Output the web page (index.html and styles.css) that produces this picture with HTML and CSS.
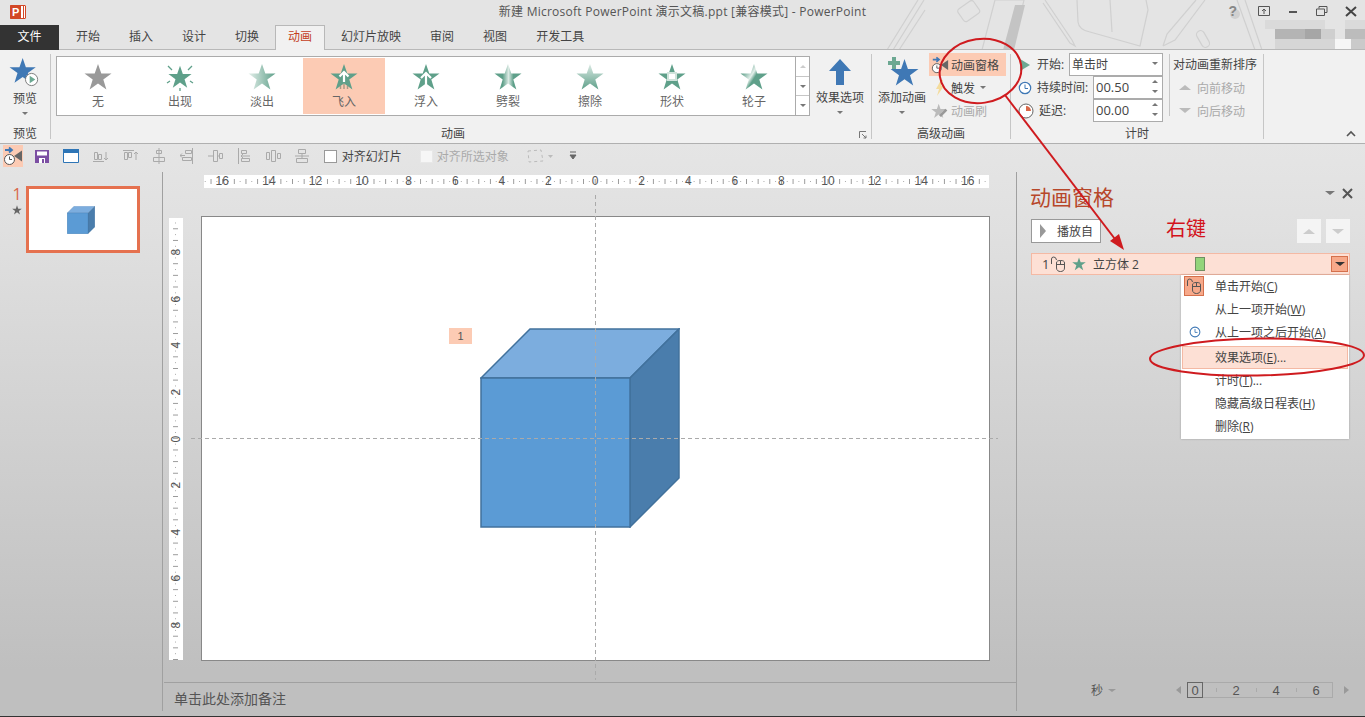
FILE: index.html
```html
<!DOCTYPE html>
<html lang="zh-CN">
<head>
    <meta charset="UTF-8">
    <title>新建 Microsoft PowerPoint 演示文稿.ppt [兼容模式] - PowerPoint</title>
    <link rel="stylesheet" href="styles.css">
</head>
<body>
    <!-- shared icons -->
    <svg class="defs" width="0" height="0">
        <defs>
            <symbol id="star" viewBox="0 0 28 28"><polygon points="14,1 17.3,10.5 27.5,10.5 19.3,16.6 22.4,26.5 14,20.5 5.6,26.5 8.7,16.6 0.5,10.5 10.7,10.5"/></symbol>
            <symbol id="cube" viewBox="0 0 200 200">
                <polygon points="1,50 50,1 199,1 150,50" fill="#7cadde" stroke="#41719c" stroke-width="1.5"/>
                <polygon points="150,50 199,1 199,150 150,199" fill="#4a7dac" stroke="#41719c" stroke-width="1.5"/>
                <rect x="1" y="50" width="149" height="149" fill="#5b9bd5" stroke="#41719c" stroke-width="1.5"/>
            </symbol>
            <symbol id="mouse" viewBox="0 0 14 16">
                <path d="M.5 8V3Q.5 1 2.800 1 5 1 5.500 4M5.500 7C5.500 5 7 4.500 9.500 4.500S13.500 5 13.500 7V12C13.500 14.500 11.500 15.500 9.500 15.500S5.500 14.500 5.500 12ZM5.500 8.500H13.500M9.500 4.500V8.500" fill="none" stroke="#555" stroke-width="1"/>
            </symbol>
            <symbol id="clock" viewBox="0 0 14 14">
                <circle cx="7" cy="7" r="5.700" fill="#fff" stroke="#3f78b5" stroke-width="1.200"/>
                <path d="M7 3.500V7.500H10" fill="none" stroke="#3f78b5"/>
            </symbol>
            <symbol id="pane-icon" viewBox="0 0 20 20">
                <path d="M2 4h6M6 1.500 9 4 6 6.500" fill="none" stroke="#3f78b5" stroke-width="1.800"/>
                <circle cx="6.500" cy="13.500" r="5" fill="#fff" stroke="#555"/>
                <path d="M6.500 10.500v3h2.500" fill="none" stroke="#555"/>
                <polygon points="19,4.500 19,15.500 11,10" fill="#666"/>
            </symbol>
            <linearGradient id="fade-x"><stop offset="0" stop-color="#e3efea"/><stop offset="1" stop-color="#5fa08a"/></linearGradient>
            <linearGradient id="fade-y" x2="0" y2="1"><stop offset="0" stop-color="#dbeae4"/><stop offset="1" stop-color="#5fa08a"/></linearGradient>
            <linearGradient id="split"><stop offset="0.3" stop-color="#5fa08a"/><stop offset="0.52" stop-color="#dbeae4"/><stop offset="0.7" stop-color="#5fa08a"/></linearGradient>
            <linearGradient id="wheel" x2="1" y2="0.600"><stop offset="0.200" stop-color="#5fa08a"/><stop offset="0.500" stop-color="#e3efea"/><stop offset="0.620" stop-color="#5fa08a"/></linearGradient>
        </defs>
    </svg>

    <header class="top">
        <!-- doodles of the Office theme, plus the blurred account name -->
        <svg class="doodles" width="485" height="50" viewBox="880 0 485 50">
            <g fill="none" stroke="#d0d0d0" stroke-width="1.200">
                <path d="M887 50 918 0M893 50 924 0M899 50 925 10"/>
                <rect x="959" y="4" width="19" height="15" rx="3" transform="rotate(-35 968 11)"/>
                <path d="M982 50 995 0H1024L1012 50"/>
                <path d="M1045 0 1072 40 1075 46 1070 43 1043 3"/>
                <path d="M1077 0 1078 22Q1079 30 1090 32L1140 46 1148 10 1146 0M1110 0 1112 32"/>
                <path d="M1163 46 1167 34 1196 0M1163 46 1175 40 1205 0"/>
                <rect x="1199" y="30" width="8" height="18" rx="4" transform="rotate(-30 1203 39)"/>
                <path d="M1237 0 1255 50M1245 0 1262 50"/>
            </g>
            <path d="M1003 50 1015 5 1025 5 1014 50Z" fill="#c4c4c4"/>
            <circle cx="1235" cy="14" r="5" fill="#d0d0d0"/>
            <g fill="#dadada">
                <rect x="1265" y="20" width="60" height="9"/>
                <rect x="1345" y="20" width="20" height="9"/>
            </g>
            <g fill="#b4b4b4">
                <rect x="1275" y="29" width="30" height="10"/>
                <rect x="1305" y="29" width="16" height="10" fill="#a6a6a6"/>
                <rect x="1321" y="29" width="14" height="10" fill="#cfcfcf"/>
                <rect x="1345" y="29" width="20" height="10" fill="#bcbcbc"/>
                <rect x="1275" y="39" width="60" height="10" fill="#d6d6d6"/>
                <rect x="1335" y="39" width="16" height="10" fill="#f6f6f6"/>
                <rect x="1351" y="39" width="14" height="10" fill="#cacaca"/>
            </g>
        </svg>

        <div class="title-bar">
            <div class="app-logo"><span class="app-logo-p">P</span></div>
            <div class="doc-title">新建 Microsoft PowerPoint 演示文稿.ppt [兼容模式] - PowerPoint</div>
            <div class="window-btns">
                <span class="help-btn">?</span>
                <svg width="12" height="10"><path d="M.5.500h11v9H.5zM6 8V3M4 5l2-2 2 2" fill="none" stroke="#555"/></svg>
                <svg width="12" height="10"><path d="M2 6h8" stroke="#555" stroke-width="2"/></svg>
                <svg width="12" height="10"><path d="M3 2.500V.500h8v6H9M.5 3h8v6.500H.5z" fill="none" stroke="#555"/></svg>
                <svg width="12" height="11"><path d="M1 1 11 10M11 1 1 10" stroke="#444" stroke-width="2"/></svg>
            </div>
        </div>

        <nav class="tabs">
            <a class="tab tab-file">文件</a>
            <a class="tab">开始</a>
            <a class="tab">插入</a>
            <a class="tab">设计</a>
            <a class="tab">切换</a>
            <a class="tab tab-active">动画</a>
            <a class="tab">幻灯片放映</a>
            <a class="tab">审阅</a>
            <a class="tab">视图</a>
            <a class="tab">开发工具</a>
        </nav>
    </header>

    <section class="ribbon">
        <div class="group group-preview">
            <div class="group-body">
                <button class="big-btn big-btn-preview">
                    <svg class="big-icon" width="36" height="32" viewBox="0 0 36 32">
                        <use href="#star" width="29" height="29" x="1" y="0" fill="#3f78b5"/>
                        <circle cx="25" cy="24" r="6.500" fill="#fff" stroke="#777"/>
                        <polygon points="23,20 23,28 29,24" fill="#6ca892"/>
                    </svg>
                    <span>预览</span>
                    <i class="tri-down"></i>
                </button>
            </div>
            <div class="group-label">预览</div>
        </div>

        <div class="group group-anim">
            <div class="group-body">
                <div class="gallery">
                    <div class="gallery-items">
                        <div class="gallery-item"><svg width="28" height="28"><use href="#star" fill="#999"/></svg><span>无</span></div>
                        <div class="gallery-item">
                            <svg width="28" height="28" viewBox="0 0 28 28"><use href="#star" x="2" y="2" width="24" height="24" fill="#5fa08a"/><path d="M2 3 6 7M26 3 22 7M1 20 4 18M27 20 24 18M14 28V25" stroke="#5fa08a" stroke-width="1.300"/></svg>
                            <span>出现</span>
                        </div>
                        <div class="gallery-item"><svg width="28" height="28"><use href="#star" fill="url(#fade-x)"/></svg><span>淡出</span></div>
                        <div class="gallery-item gallery-item-active">
                            <svg width="28" height="28" viewBox="0 0 28 28"><use href="#star" width="28" height="28" fill="#5fa08a"/><path d="M14 19V9M9.500 13.500 14 9l4.500 4.500" fill="none" stroke="#fff" stroke-width="2.200"/><path d="M10.500 23v3M14 21v5M17.500 23v3" stroke="#a89a84" stroke-width="1.500"/></svg>
                            <span>飞入</span>
                        </div>
                        <div class="gallery-item">
                            <svg width="28" height="28" viewBox="0 0 28 28"><use href="#star" width="28" height="28" fill="#5fa08a"/><path d="M14 23V10M9 15 14 10l5 5" fill="none" stroke="#fff" stroke-width="2.200"/></svg>
                            <span>浮入</span>
                        </div>
                        <div class="gallery-item"><svg width="28" height="28"><use href="#star" fill="url(#split)"/></svg><span>劈裂</span></div>
                        <div class="gallery-item"><svg width="28" height="28"><use href="#star" fill="url(#fade-y)"/></svg><span>擦除</span></div>
                        <div class="gallery-item">
                            <svg width="28" height="28" viewBox="0 0 28 28"><use href="#star" width="28" height="28" fill="#5fa08a"/><rect x="10" y="10" width="8" height="7" fill="#fff" stroke="#cfe3db" stroke-width="2"/></svg>
                            <span>形状</span>
                        </div>
                        <div class="gallery-item"><svg width="28" height="28"><use href="#star" fill="url(#wheel)"/></svg><span>轮子</span></div>
                    </div>
                    <div class="gallery-scroll">
                        <div class="scroll-btn"><i class="tri-up tri-pale"></i></div>
                        <div class="scroll-btn"><i class="tri-down"></i></div>
                        <div class="scroll-btn scroll-more"><i class="tri-down"></i></div>
                    </div>
                </div>
                <button class="big-btn big-btn-effect">
                    <svg class="big-icon" width="24" height="28" viewBox="0 0 24 28"><path d="M12 1 23 13H16V27H8V13H1Z" fill="#3f78b5"/></svg>
                    <span>效果选项</span>
                    <i class="tri-down"></i>
                </button>
            </div>
            <div class="group-label group-label-anim">动画
                <svg class="launcher" width="8" height="8"><path d="M.5 7V.500H7M3 3l4 4M7 4.500V7H4.500" fill="none" stroke="#777"/></svg>
            </div>
        </div>

        <div class="group group-advanced">
            <div class="group-body">
                <button class="big-btn big-btn-add">
                    <svg class="big-icon" width="34" height="30" viewBox="0 0 34 30">
                        <use href="#star" width="29" height="29" x="5" y="1" fill="#3f78b5"/>
                        <path d="M7 0h4v4h4v4h-4v4H7V8H3V4h4z" fill="#6ca892"/>
                    </svg>
                    <span>添加动画</span>
                    <i class="tri-down"></i>
                </button>
                <div class="small-btns">
                    <div class="small-btn small-btn-on"><svg width="18" height="18"><use href="#pane-icon"/></svg><span>动画窗格</span></div>
                    <div class="small-btn">
                        <svg width="18" height="18" viewBox="0 0 18 18"><path d="M10 1 5 10H8L6 17 13 7H10L12 1Z" fill="#f4dc9c"/></svg>
                        <span>触发</span><i class="tri-down tri-trigger"></i>
                    </div>
                    <div class="small-btn small-btn-off">
                        <svg width="18" height="18" viewBox="0 0 28 28"><use href="#star" width="24" height="24" y="2" fill="#bbb"/><path d="M14 22 24 12" stroke="#999" stroke-width="4"/></svg>
                        <span>动画刷</span>
                    </div>
                </div>
            </div>
            <div class="group-label">高级动画</div>
        </div>

        <div class="group group-timing">
            <div class="group-body">
                <div class="timing-rows">
                    <div class="timing-row">
                        <svg class="timing-icon" width="14" height="14"><polygon points="2,1 12,7 2,13" fill="#6ca892"/></svg>
                        <label>开始:</label>
                        <div class="field field-select">单击时<i class="tri-down"></i></div>
                    </div>
                    <div class="timing-row">
                        <svg class="timing-icon" width="14" height="14"><use href="#clock"/></svg>
                        <label>持续时间:</label>
                        <div class="field field-spin">00.50<span class="spin"><i class="tri-up"></i><i class="tri-down"></i></span></div>
                    </div>
                    <div class="timing-row">
                        <svg class="timing-icon" width="16" height="16" viewBox="0 0 16 16"><circle cx="8" cy="8" r="7" fill="#fff" stroke="#666"/><path d="M8 3V8H13A5 5 0 0 0 8 3Z" fill="#d9694a"/></svg>
                        <label>延迟:</label>
                        <div class="field field-spin">00.00<span class="spin"><i class="tri-up"></i><i class="tri-down"></i></span></div>
                    </div>
                </div>
                <div class="reorder">
                    <div class="reorder-title">对动画重新排序</div>
                    <div class="reorder-row"><i class="tri-up tri-big"></i>向前移动</div>
                    <div class="reorder-row"><i class="tri-down tri-big"></i>向后移动</div>
                </div>
            </div>
            <div class="group-label">计时</div>
        </div>

        <div class="ribbon-end">
            <svg width="10" height="7"><path d="M1 6 5 2 9 6" fill="none" stroke="#555" stroke-width="1.600"/></svg>
        </div>
    </section>

    <main class="main">
        <div class="pane-toolbar">
            <div class="tool tool-on"><svg width="20" height="20"><use href="#pane-icon"/></svg></div>
            <div class="tool">
                <svg width="16" height="16" viewBox="0 0 16 16"><path d="M1 2h14v13H1z" fill="#7c4fa3"/><path d="M3 3.500h10v4H3z" fill="#fff"/><path d="M5 10h6v5H5z" fill="#fff"/><path d="M8 11h2v4H8z" fill="#7c4fa3"/></svg>
            </div>
            <div class="tool">
                <svg width="16" height="14" viewBox="0 0 16 14"><path d="M.5.500h15v13H.5z" fill="#fff" stroke="#2e75b6"/><path d="M0 0h16v4H0z" fill="#2e75b6"/></svg>
            </div>
            <div class="tool-set">
                <svg width="16" height="14" viewBox="0 0 16 14"><path d="M1.500 3.500h3v7h-3zM5.500 5.500h3v5h-3zM0 12.500h11M13 3v8M11 9l2 2 2-2"/></svg>
                <svg width="16" height="14" viewBox="0 0 16 14"><path d="M1.500 3.500h3v7h-3zM5.500 3.500h3v5h-3zM0 1.500h11M13 11V3M11 5l2-2 2 2"/></svg>
                <svg width="14" height="16" viewBox="0 0 14 16"><path d="M4.500 2.500h5v3h-5zM1.500 9.500h11v4h-11zM7 0v16"/></svg>
                <svg width="14" height="16" viewBox="0 0 14 16"><path d="M5.500 2.500h6v3h-6zM2.500 9.500h9v3h-9zM12.500 0v16M5 7.500H0M2 5.500l-2 2 2 2"/></svg>
                <svg width="16" height="14" viewBox="0 0 16 14"><path d="M5.500 1.500h4v11h-4zM11.500 4.500h3v5h-3zM0 7h5.500M9.500 7h2"/></svg>
                <svg width="14" height="16" viewBox="0 0 14 16"><path d="M1.500 0v16M4.500 2.500h5v3h-5zM4.500 10.500h8v3h-8zM13 8H4M6 6 4 8l2 2"/></svg>
                <svg width="16" height="14" viewBox="0 0 16 14"><path d="M1.500 3.500h3v7h-3zM6.500 1.500h4v11h-4zM12.500 4.500h3v5h-3z"/></svg>
                <svg width="14" height="16" viewBox="0 0 14 16"><path d="M3.500 1.500h7v4h-7zM1.500 10.500h11v4h-11zM7 5.500v5M0 8h14"/></svg>
            </div>
            <label class="check"><i class="check-box"></i>对齐幻灯片</label>
            <label class="check check-off"><i class="check-box"></i>对齐所选对象</label>
            <svg class="tool-select" width="30" height="14" viewBox="0 0 30 14"><path d="M3 2 16 1 18 12 4 13Z" fill="none" stroke="#bbb" stroke-dasharray="3 3"/><path d="M23 6h5l-2.500 3z" fill="#bbb"/></svg>
            <svg class="tool-more" width="8" height="10"><path d="M1 1h6M1 4h6l-3 4z" fill="#666" stroke="#666"/></svg>
        </div>

        <div class="workspace">
            <aside class="thumbs">
                <div class="thumb-num">
                    <span>1</span>
                    <svg width="10" height="10"><use href="#star" width="10" height="10" fill="#666"/></svg>
                </div>
                <div class="thumb"><svg width="28" height="28"><use href="#cube" width="28" height="28"/></svg></div>
            </aside>
            <div class="vsep"></div>

            <div class="editor">
                <div class="ruler-top">
                    <span>16</span><span>14</span><span>12</span><span>10</span><span>8</span><span>6</span><span>4</span><span>2</span><span>0</span><span>2</span><span>4</span><span>6</span><span>8</span><span>10</span><span>12</span><span>14</span><span>16</span>
                </div>
                <div class="canvas-row">
                    <div class="ruler-left">
                        <span>8</span><span>6</span><span>4</span><span>2</span><span>0</span><span>2</span><span>4</span><span>6</span><span>8</span>
                    </div>
                    <div class="slide">
                        <span class="anim-badge">1</span>
                        <svg class="slide-cube" width="200" height="200"><use href="#cube" width="200" height="200"/></svg>
                    </div>
                </div>
                <div class="notes">单击此处添加备注</div>
                <div class="guide guide-v"></div>
                <div class="guide guide-h"></div>
            </div>
            <div class="vsep"></div>

            <aside class="anim-pane">
                <div class="pane-head">
                    <h2>动画窗格</h2>
                    <div class="pane-head-btns">
                        <i class="tri-down tri-big"></i>
                        <svg width="11" height="11"><path d="M1 1 10 10M10 1 1 10" stroke="#555" stroke-width="2"/></svg>
                    </div>
                </div>
                <div class="pane-controls">
                    <button class="play-btn"><i class="tri-right"></i>播放自</button>
                    <div class="order-btns">
                        <div class="order-btn"><i class="tri-up tri-big tri-pale"></i></div>
                        <div class="order-btn"><i class="tri-down tri-big tri-pale"></i></div>
                    </div>
                </div>
                <div class="anim-row">
                    <span class="anim-row-num">1</span>
                    <svg width="14" height="16"><use href="#mouse"/></svg>
                    <svg class="anim-row-star" width="14" height="14"><use href="#star" width="14" height="14" fill="#5fa08a"/></svg>
                    <span class="anim-row-name">立方体 2</span>
                    <i class="anim-bar"></i>
                    <span class="row-drop"><i class="tri-down tri-dark"></i></span>
                </div>

                <ul class="ctx-menu">
                    <li><span class="ctx-icon ctx-icon-on"><svg width="14" height="16"><use href="#mouse"/></svg></span>单击开始(<u>C</u>)</li>
                    <li><span class="ctx-icon"></span>从上一项开始(<u>W</u>)</li>
                    <li><span class="ctx-icon"><svg width="12" height="12"><use href="#clock"/></svg></span>从上一项之后开始(<u>A</u>)</li>
                    <li class="ctx-hover"><span class="ctx-icon"></span>效果选项(<u>E</u>)...</li>
                    <li><span class="ctx-icon"></span>计时(<u>T</u>)...</li>
                    <li><span class="ctx-icon"></span>隐藏高级日程表(<u>H</u>)</li>
                    <li><span class="ctx-icon"></span>删除(<u>R</u>)</li>
                </ul>

                <div class="timeline">
                    <span class="timeline-unit">秒<i class="tri-down"></i></span>
                    <i class="tri-left"></i>
                    <div class="timeline-scale">
                        <span class="timeline-zero">0</span><span>2</span><span>4</span><span>6</span>
                    </div>
                    <i class="tri-right tri-small"></i>
                </div>
            </aside>
        </div>
    </main>

    <!-- red notes someone drew on top of the screenshot -->
    <span class="note-right-click">右键</span>
    <svg class="annotations" width="1365" height="717">
        <g fill="none" stroke="#cf1b1f" stroke-width="2">
            <ellipse cx="980.500" cy="71" rx="41" ry="32" transform="rotate(-8 980 71)"/>
            <ellipse cx="1257" cy="357" rx="107" ry="18.500" transform="rotate(-1 1257 357)"/>
            <path d="M1005 95 1118 243"/>
        </g>
        <polygon points="1124,250 1110,241 1119,234" fill="#cf1b1f"/>
    </svg>
</body>
</html>
```

FILE: styles.css
```css
* {
    box-sizing: border-box;
}

html, body {
    margin: 0;
    height: 100%;
}

body {
    position: relative;
    width: 1365px;
    height: 717px;
    overflow: hidden;
    display: flex;
    flex-direction: column;
    font-family: "Open Sans", "Noto Sans CJK SC", sans-serif;
    font-size: 12px;
    color: #444;
    background: #c0c0c0;
}

i {
    display: inline-block;
    font-style: normal;
}

button {
    font: inherit;
    color: inherit;
    background: none;
    border: none;
    padding: 0;
}

.defs {
    position: absolute;
}

/* little triangles */
.tri-down, .tri-up, .tri-left, .tri-right {
    width: 0;
    height: 0;
    border-style: solid;
    border-color: transparent;
}

.tri-down {
    border-width: 3px 3px 0;
    border-top-color: #777;
}

.tri-up {
    border-width: 0 3px 3px;
    border-bottom-color: #777;
}

.tri-left {
    border-width: 4px 5px 4px 0;
    border-right-color: #999;
}

.tri-right {
    border-width: 7px 0 7px 6px;
    border-left-color: #999;
}

.tri-small {
    border-width: 4px 0 4px 5px;
}

.tri-big.tri-down {
    border-width: 5px 6px 0;
    border-top-color: #bbb;
}

.tri-big.tri-up {
    border-width: 0 6px 5px;
    border-bottom-color: #bbb;
}

.tri-up.tri-pale {
    border-bottom-color: #ccc;
}

.tri-down.tri-pale {
    border-top-color: #ccc;
}

.tri-dark {
    border-width: 4px 5px 0;
    border-top-color: #333;
}

/* title bar and tabs */
.top {
    position: relative;
    background: #e4e4e4;
    flex: none;
}

.doodles {
    position: absolute;
    top: 0;
    left: 880px;
}

.title-bar {
    position: relative;
    height: 25px;
    display: grid;
    grid-template-columns: 1fr auto 1fr;
    align-items: center;
}

.app-logo {
    width: 16px;
    height: 14px;
    margin: -2px 0 0 10px;
    background: #d24726;
    border-radius: 1px;
    border-right: 5px double #fff;
    outline: 1px solid #d24726;
    outline-offset: -1px;
    line-height: 14px;
}

.app-logo-p {
    display: block;
    padding-left: 2px;
    font: bold 11px/14px "Liberation Sans", sans-serif;
    color: #fff;
}

.doc-title {
    color: #555;
    margin-top: -3px;
    letter-spacing: 0.25px;
}

.window-btns {
    display: flex;
    justify-content: flex-end;
    align-items: center;
    gap: 17px;
    padding-right: 8px;
    margin-top: -3px;
}

.help-btn {
    font: bold 14px/14px "Liberation Sans", sans-serif;
    color: #888;
    margin-right: 4px;
}

.tabs {
    position: relative;
    height: 25px;
    display: flex;
    align-items: flex-start;
    border-bottom: 1px solid #b8b8b8;
}

.tab {
    height: 25px;
    padding: 0 13.5px;
    line-height: 22px;
    border: 1px solid transparent;
    border-bottom: none;
    color: #444;
    background: transparent;
}

.tab-file {
    width: 59px;
    margin-right: 2.500px;
    padding: 0;
    text-align: center;
    color: #fff;
    background: #333;
}

.tab-active {
    margin: 0 1.500px;
    padding: 0 12px;
    color: #c43e1c;
    background: #f1f1f1;
    border-color: #b8b8b8;
}

/* ribbon */
.ribbon {
    flex: none;
    height: 94px;
    display: flex;
    background: #f1f1f1;
    border-bottom: 1px solid #b0b0b0;
}

.group {
    height: 85px;
    margin-top: 4px;
    display: flex;
    flex-direction: column;
    border-right: 1px solid #c6c6c6;
}

.group-body {
    flex: 1;
    display: flex;
    min-height: 0;
}

.group-label {
    position: relative;
    height: 15px;
    margin-bottom: -2px;
    line-height: 15px;
    text-align: center;
    color: #444;
}

.group-label-anim {
    padding-right: 16px;
}

.launcher {
    position: absolute;
    right: 4px;
    top: 5px;
}

.group-preview {
    width: 51px;
}

.group-anim {
    width: 821px;
}

.group-advanced {
    width: 139px;
}

.group-timing {
    width: 253px;
}

.big-btn {
    display: flex;
    flex-direction: column;
    align-items: center;
    width: 50px;
}

.big-btn span {
    margin-top: 1px;
    line-height: 16px;
    white-space: nowrap;
}

.big-btn .tri-down {
    margin-top: 5px;
}

.big-icon {
    height: 33px;
    margin-bottom: 2px;
    padding-top: 3px;
}

.big-btn-preview span {
    margin-top: 2px;
}

.big-btn-effect {
    margin-left: 5px;
}

.big-btn-add {
    margin-left: 5px;
}

.gallery {
    width: 754px;
    height: 60px;
    margin: 2px 0 0 5px;
    display: flex;
    justify-content: space-between;
    background: #fff;
    border: 1px solid #ababab;
}

.gallery-items {
    display: flex;
    padding-top: 1px;
}

.gallery-item {
    width: 82px;
    height: 56px;
    padding-top: 5px;
    display: flex;
    flex-direction: column;
    align-items: center;
    color: #666;
}

.gallery-item span {
    line-height: 16px;
    margin-top: 3px;
}

.gallery-item-active {
    background: #fccbb4;
}

.gallery-scroll {
    width: 14px;
    display: flex;
    flex-direction: column;
    border-left: 1px solid #ababab;
}

.scroll-btn {
    flex: 1;
    display: flex;
    align-items: center;
    justify-content: center;
    border-bottom: 1px solid #c6c6c6;
}

.scroll-btn:last-child {
    border-bottom: none;
}

.scroll-more .tri-down {
    box-shadow: 0 -4px 0 -3px #777;
}

.small-btns {
    margin: -1px 0 0 2px;
    width: 77px;
}

.small-btn {
    height: 23px;
    display: flex;
    align-items: center;
    padding-left: 2px;
    gap: 2px;
    color: #444;
}

.small-btn-on {
    background: #fccbb4;
}

.small-btn-off {
    color: #aaa;
}

.tri-trigger {
    margin-left: 3px;
}

.timing-rows {
    width: 152px;
    margin-top: -1px;
    padding-left: 7px;
}

.timing-row {
    height: 23px;
    display: flex;
    align-items: center;
}

.timing-icon {
    flex: none;
    margin-right: 5px;
}

.timing-row label {
    flex: 1;
    padding-bottom: 2px;
    white-space: nowrap;
}

.field {
    height: 23px;
    display: flex;
    align-items: center;
    justify-content: space-between;
    background: #fff;
    border: 1px solid #ababab;
    padding: 0 4px 2px 2px;
}

.field-select {
    width: 94px;
}

.field-spin {
    width: 70px;
    font-size: 13px;
}

.spin {
    display: flex;
    flex-direction: column;
    gap: 7px;
}

.reorder {
    width: 94px;
    height: 62px;
    margin: 0 0 0 6px;
    padding-left: 3px;
    border-left: 1px solid #c6c6c6;
}

.reorder-title {
    line-height: 22px;
    white-space: nowrap;
}

.reorder-row {
    height: 23px;
    display: flex;
    align-items: center;
    gap: 6px;
    padding-left: 6px;
    color: #aaa;
}

.reorder-row:first-of-type {
    margin-top: 2px;
}

.ribbon-end {
    flex: 1;
    display: flex;
    justify-content: flex-end;
    align-items: flex-end;
    padding: 0 9px 6px 0;
}

/* everything below the ribbon sits on one long grey gradient */
.main {
    flex: 1;
    display: flex;
    flex-direction: column;
    min-height: 0;
    background: linear-gradient(#e5e5e5, #e0e0e0 15%, #bfbfbf 92%);
    border-bottom: 1px solid #333;
}

.pane-toolbar {
    flex: none;
    height: 24px;
    display: flex;
    align-items: center;
    padding-left: 3px;
}

.tool {
    width: 20px;
    height: 22px;
    margin-right: 9px;
    display: flex;
    align-items: center;
    justify-content: center;
}

.tool-on {
    background: #fccbb4;
}

.tool-set {
    display: flex;
    align-items: center;
    margin-left: 3px;
    gap: 13.7px;
}

.tool-set path {
    fill: none;
    stroke: #aaa;
}

.check {
    display: flex;
    align-items: center;
    gap: 5px;
    margin-left: 15px;
    color: #444;
}

.check-box {
    width: 13px;
    height: 13px;
    background: #fff;
    border: 1px solid #999;
}

.check-off {
    margin-left: 18px;
    gap: 4px;
    color: #aaa;
}

.check-off .check-box {
    border-color: #e8e8e8;
    background: #f6f6f6;
}

.tool-select {
    margin-left: 16px;
}

.tool-more {
    margin-left: 14px;
}

.workspace {
    flex: 1;
    display: flex;
    min-height: 0;
}

.vsep {
    flex: none;
    width: 1px;
    margin: 4px 0 5px;
    background: #a0a0a0;
}

/* slide list */
.thumbs {
    width: 162px;
    display: flex;
    align-items: flex-start;
    padding: 18px 0 0 10px;
}

.thumb-num {
    width: 14px;
    margin-right: 2px;
    display: flex;
    flex-direction: column;
    align-items: center;
    gap: 3px;
    font-size: 16px;
    line-height: 16px;
    color: #d9694a;
}

.thumb {
    width: 114px;
    height: 67px;
    display: flex;
    align-items: center;
    justify-content: center;
    padding-right: 4px;
    background: #fff;
    border: 3px solid #e5714f;
}

/* editor */
.editor {
    position: relative;
    width: 853px;
    display: flex;
    flex-direction: column;
}

.ruler-top {
    width: 785px;
    height: 13px;
    margin: 7px 0 0 41px;
    display: flex;
    overflow: hidden;
    font: 12px/13px "Liberation Sans", sans-serif;
    color: #555;
    background-color: #fff;
    background-repeat: repeat-x;
    background-size: 11.650px 5px, 11.650px 1px;
    background-position: 6.550px 4px, 0.720px 6px;
    background-image:
        linear-gradient(90deg, #999 1px, transparent 1px),
        linear-gradient(90deg, #aaa 1px, transparent 1px);
}

.ruler-top span {
    flex: none;
    position: relative;
    left: -5px;
    width: 46.600px;
    text-align: center;
}

.canvas-row {
    display: flex;
    align-items: flex-start;
    margin-top: 28px;
}

.ruler-left {
    width: 14px;
    height: 442px;
    margin: 2px 0 0 6px;
    padding-top: 11.300px;
    font: 12px/14px "Liberation Sans", sans-serif;
    color: #555;
    background-color: #fff;
    background-repeat: repeat-y;
    background-size: 5px 11.650px, 1px 11.650px;
    background-position: 4px 10.300px, 6px 4.500px;
    background-image:
        linear-gradient(#999 1px, transparent 1px),
        linear-gradient(#aaa 1px, transparent 1px);
}

.ruler-left span {
    display: block;
    height: 46.600px;
    text-align: center;
    writing-mode: vertical-rl;
    transform: rotate(180deg);
}

.slide {
    position: relative;
    width: 789px;
    height: 445px;
    margin-left: 18px;
    background: #fff;
    border: 1px solid #888;
}

.anim-badge {
    position: absolute;
    left: 247px;
    top: 111px;
    width: 23px;
    height: 16px;
    text-align: center;
    font: 11px/16px "Liberation Sans", sans-serif;
    color: #555;
    background: #fccbb4;
}

.slide-cube {
    position: absolute;
    left: 278px;
    top: 111px;
}

.notes {
    flex: 1;
    margin: 21px 0 0 1px;
    padding: 6px 0 0 10px;
    font-size: 14px;
    line-height: 20px;
    color: #555;
    border-top: 1px solid #a0a0a0;
}

.guide {
    position: absolute;
    pointer-events: none;
}

.guide-v {
    left: 432px;
    top: 27px;
    width: 1px;
    height: 485px;
    background: repeating-linear-gradient(#aaa 0 4px, transparent 4px 7px);
}

.guide-h {
    left: 28px;
    top: 270px;
    width: 807px;
    height: 1px;
    background: repeating-linear-gradient(90deg, #aaa 0 4px, transparent 4px 7px);
}

/* animation pane */
.anim-pane {
    position: relative;
    flex: 1;
    display: flex;
    flex-direction: column;
    padding: 15px 15px 0 14px;
}

.pane-head {
    display: flex;
    justify-content: space-between;
    margin-left: -1px;
    height: 36px;
}

.pane-head h2 {
    margin: 0;
    font-size: 21px;
    font-weight: 400;
    line-height: 29px;
    color: #b7472a;
}

.pane-head-btns {
    display: flex;
    align-items: center;
    gap: 7px;
    height: 20px;
    margin-right: -3px;
}

.pane-head-btns .tri-down {
    border-top-color: #777;
    border-width: 4px 5px 0;
}

.pane-controls {
    display: flex;
    justify-content: space-between;
    height: 24px;
}

.play-btn {
    width: 70px;
    height: 24px;
    display: flex;
    align-items: center;
    gap: 11px;
    padding-left: 8px;
    background: #fff;
    border: 1px solid #999;
}

.order-btns {
    display: flex;
    gap: 5px;
}

.order-btn {
    width: 24px;
    height: 24px;
    display: flex;
    align-items: center;
    justify-content: center;
    background: #f4f4f4;
}

.anim-row {
    height: 22px;
    margin-top: 10px;
    display: flex;
    align-items: center;
    padding-left: 10px;
    background: #fde0d5;
    border: 1px solid #f4b9a4;
}

.anim-row-num {
    width: 9px;
    font-size: 13px;
}

.anim-row-star {
    margin-left: 7px;
}

.anim-row-name {
    margin-left: 7px;
    width: 102px;
    font-size: 12px;
}

.anim-bar {
    width: 10px;
    height: 14px;
    background: #92d47a;
    border: 1px solid #6f8f62;
}

.row-drop {
    width: 17px;
    height: 16px;
    margin-left: auto;
    margin-right: 1px;
    display: flex;
    align-items: center;
    justify-content: center;
    background: #f7a98a;
    border: 1px solid #d4704c;
}

.ctx-menu {
    position: absolute;
    left: 164px;
    top: 107px;
    width: 168px;
    height: 164px;
    margin: 0;
    padding: 0;
    list-style: none;
    background: #fff;
    box-shadow: 0 0 2px rgba(0, 0, 0, 0.25);
}

.ctx-menu li {
    position: relative;
    height: 23px;
    padding-bottom: 1px;
    display: flex;
    align-items: center;
    white-space: pre;
    color: #444;
}

.ctx-icon {
    flex: none;
    width: 34px;
    display: flex;
    align-items: center;
    justify-content: center;
    padding-right: 7px;
}

.ctx-icon-on {
    width: 20px;
    height: 20px;
    margin: 0 11px 0 3px;
    padding: 0;
    background: #f7a98a;
    border: 1px solid #d4704c;
}

.ctx-menu .ctx-hover {
    margin: 2px 1px 0;
    background: #fde0d5;
    border: 1px solid #f4b9a4;
}

.ctx-hover .ctx-icon {
    width: 32px;
}

.timeline {
    margin-top: auto;
    margin-bottom: 18px;
    height: 16px;
    display: flex;
    align-items: center;
    color: #555;
}

.timeline-unit {
    display: flex;
    align-items: center;
    gap: 5px;
    margin: 0 60px 0 60px;
}

.timeline-unit .tri-down {
    border-width: 3px 4px 0;
    border-top-color: #999;
}

.timeline-scale {
    flex: none;
    width: 146px;
    height: 16px;
    margin: 0 11px 0 6px;
    display: flex;
    font: 13px/15px "Liberation Sans", sans-serif;
    border: 1px solid #aaa;
}

.timeline-scale span {
    flex: none;
    width: 40px;
    text-align: center;
    background: linear-gradient(#aaa, #aaa) 0 center / 1px 4px no-repeat;
}

.timeline-scale .timeline-zero {
    width: 16px;
    margin: -1px 13px -1px -1px;
    line-height: 15px;
    border: 1px solid #666;
    background: none;
}

/* hand drawn notes */
.annotations {
    position: absolute;
    top: 0;
    left: 0;
    pointer-events: none;
}

.note-right-click {
    position: absolute;
    left: 1166px;
    top: 215px;
    font-size: 20px;
    line-height: 28px;
    color: #d3121a;
}
```
